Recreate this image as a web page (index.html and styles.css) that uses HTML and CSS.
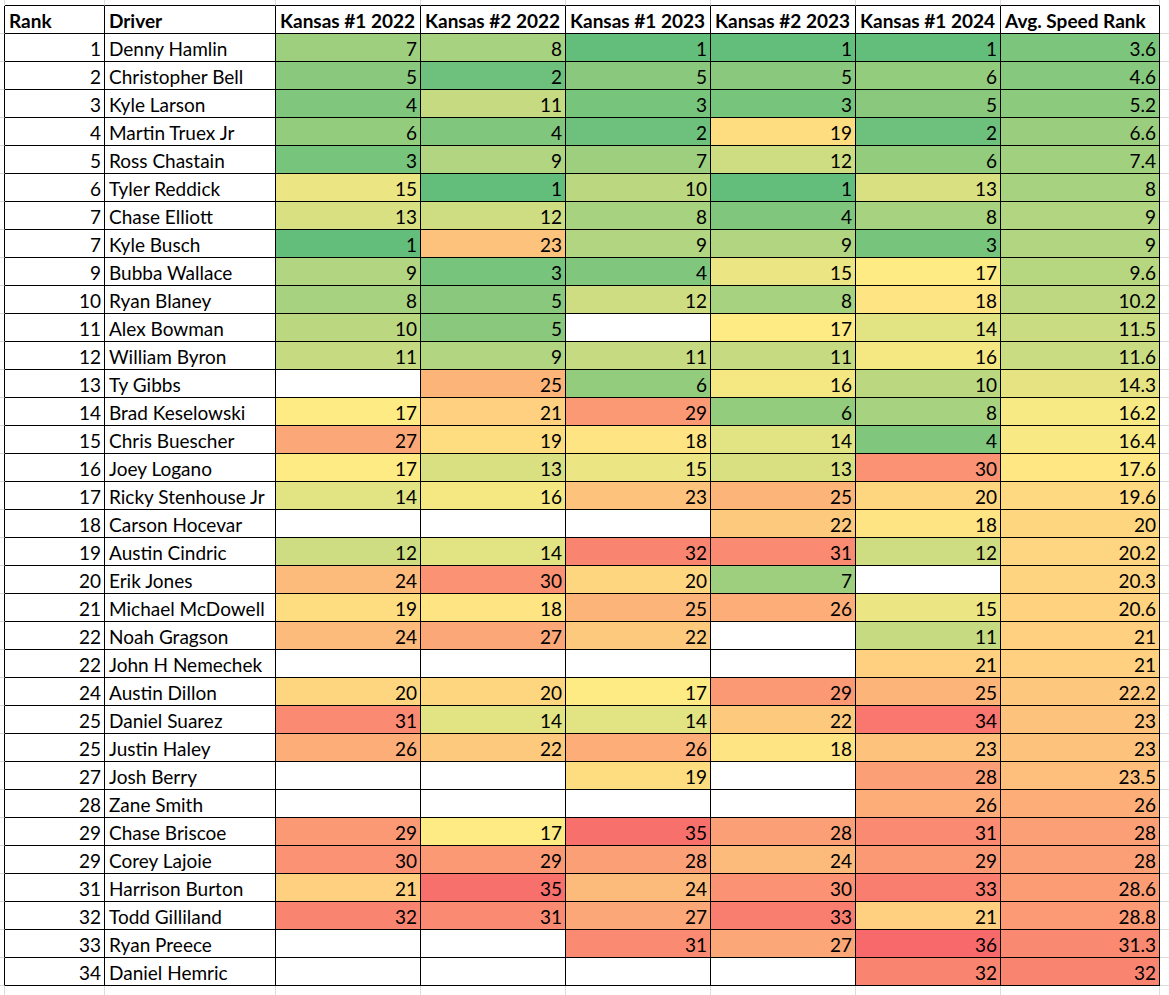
FILE: index.html
```html
<!DOCTYPE html>
<html lang="en">
<head>
<meta charset="utf-8">
<title>Kansas Speed Rankings</title>
<link rel="stylesheet" href="styles.css">
</head>
<body>
<table class="sheet">
<colgroup>
<col class="c-gl"><col class="c-rank"><col class="c-drv"><col class="c-k"><col class="c-k"><col class="c-k"><col class="c-k"><col class="c-k"><col class="c-avg"><col class="c-gr">
</colgroup>
<tbody>
<tr class="strip-top"><td class="gl"></td><td></td><td></td><td></td><td></td><td></td><td></td><td></td><td></td><td class="gr"></td></tr>
<tr class="head"><td class="gl"></td><th>Rank</th><th>Driver</th><th>Kansas #1 2022</th><th>Kansas #2 2022</th><th>Kansas #1 2023</th><th>Kansas #2 2023</th><th>Kansas #1 2024</th><th>Avg. Speed Rank</th><td class="gr"></td></tr>
<tr><td class="gl"></td><td class="num">1</td><td class="drv">Denny Hamlin</td><td class="num v">7</td><td class="num v">8</td><td class="num v">1</td><td class="num v">1</td><td class="num v">1</td><td class="num v">3.6</td><td class="gr"></td></tr>
<tr><td class="gl"></td><td class="num">2</td><td class="drv">Christopher Bell</td><td class="num v">5</td><td class="num v">2</td><td class="num v">5</td><td class="num v">5</td><td class="num v">6</td><td class="num v">4.6</td><td class="gr"></td></tr>
<tr><td class="gl"></td><td class="num">3</td><td class="drv">Kyle Larson</td><td class="num v">4</td><td class="num v">11</td><td class="num v">3</td><td class="num v">3</td><td class="num v">5</td><td class="num v">5.2</td><td class="gr"></td></tr>
<tr><td class="gl"></td><td class="num">4</td><td class="drv">Martin Truex Jr</td><td class="num v">6</td><td class="num v">4</td><td class="num v">2</td><td class="num v">19</td><td class="num v">2</td><td class="num v">6.6</td><td class="gr"></td></tr>
<tr><td class="gl"></td><td class="num">5</td><td class="drv">Ross Chastain</td><td class="num v">3</td><td class="num v">9</td><td class="num v">7</td><td class="num v">12</td><td class="num v">6</td><td class="num v">7.4</td><td class="gr"></td></tr>
<tr><td class="gl"></td><td class="num">6</td><td class="drv">Tyler Reddick</td><td class="num v">15</td><td class="num v">1</td><td class="num v">10</td><td class="num v">1</td><td class="num v">13</td><td class="num v">8</td><td class="gr"></td></tr>
<tr><td class="gl"></td><td class="num">7</td><td class="drv">Chase Elliott</td><td class="num v">13</td><td class="num v">12</td><td class="num v">8</td><td class="num v">4</td><td class="num v">8</td><td class="num v">9</td><td class="gr"></td></tr>
<tr><td class="gl"></td><td class="num">7</td><td class="drv">Kyle Busch</td><td class="num v">1</td><td class="num v">23</td><td class="num v">9</td><td class="num v">9</td><td class="num v">3</td><td class="num v">9</td><td class="gr"></td></tr>
<tr><td class="gl"></td><td class="num">9</td><td class="drv">Bubba Wallace</td><td class="num v">9</td><td class="num v">3</td><td class="num v">4</td><td class="num v">15</td><td class="num v">17</td><td class="num v">9.6</td><td class="gr"></td></tr>
<tr><td class="gl"></td><td class="num">10</td><td class="drv">Ryan Blaney</td><td class="num v">8</td><td class="num v">5</td><td class="num v">12</td><td class="num v">8</td><td class="num v">18</td><td class="num v">10.2</td><td class="gr"></td></tr>
<tr><td class="gl"></td><td class="num">11</td><td class="drv">Alex Bowman</td><td class="num v">10</td><td class="num v">5</td><td class="num v"></td><td class="num v">17</td><td class="num v">14</td><td class="num v">11.5</td><td class="gr"></td></tr>
<tr><td class="gl"></td><td class="num">12</td><td class="drv">William Byron</td><td class="num v">11</td><td class="num v">9</td><td class="num v">11</td><td class="num v">11</td><td class="num v">16</td><td class="num v">11.6</td><td class="gr"></td></tr>
<tr><td class="gl"></td><td class="num">13</td><td class="drv">Ty Gibbs</td><td class="num v"></td><td class="num v">25</td><td class="num v">6</td><td class="num v">16</td><td class="num v">10</td><td class="num v">14.3</td><td class="gr"></td></tr>
<tr><td class="gl"></td><td class="num">14</td><td class="drv">Brad Keselowski</td><td class="num v">17</td><td class="num v">21</td><td class="num v">29</td><td class="num v">6</td><td class="num v">8</td><td class="num v">16.2</td><td class="gr"></td></tr>
<tr><td class="gl"></td><td class="num">15</td><td class="drv">Chris Buescher</td><td class="num v">27</td><td class="num v">19</td><td class="num v">18</td><td class="num v">14</td><td class="num v">4</td><td class="num v">16.4</td><td class="gr"></td></tr>
<tr><td class="gl"></td><td class="num">16</td><td class="drv">Joey Logano</td><td class="num v">17</td><td class="num v">13</td><td class="num v">15</td><td class="num v">13</td><td class="num v">30</td><td class="num v">17.6</td><td class="gr"></td></tr>
<tr><td class="gl"></td><td class="num">17</td><td class="drv">Ricky Stenhouse Jr</td><td class="num v">14</td><td class="num v">16</td><td class="num v">23</td><td class="num v">25</td><td class="num v">20</td><td class="num v">19.6</td><td class="gr"></td></tr>
<tr><td class="gl"></td><td class="num">18</td><td class="drv">Carson Hocevar</td><td class="num v"></td><td class="num v"></td><td class="num v"></td><td class="num v">22</td><td class="num v">18</td><td class="num v">20</td><td class="gr"></td></tr>
<tr><td class="gl"></td><td class="num">19</td><td class="drv">Austin Cindric</td><td class="num v">12</td><td class="num v">14</td><td class="num v">32</td><td class="num v">31</td><td class="num v">12</td><td class="num v">20.2</td><td class="gr"></td></tr>
<tr><td class="gl"></td><td class="num">20</td><td class="drv">Erik Jones</td><td class="num v">24</td><td class="num v">30</td><td class="num v">20</td><td class="num v">7</td><td class="num v"></td><td class="num v">20.3</td><td class="gr"></td></tr>
<tr><td class="gl"></td><td class="num">21</td><td class="drv">Michael McDowell</td><td class="num v">19</td><td class="num v">18</td><td class="num v">25</td><td class="num v">26</td><td class="num v">15</td><td class="num v">20.6</td><td class="gr"></td></tr>
<tr><td class="gl"></td><td class="num">22</td><td class="drv">Noah Gragson</td><td class="num v">24</td><td class="num v">27</td><td class="num v">22</td><td class="num v"></td><td class="num v">11</td><td class="num v">21</td><td class="gr"></td></tr>
<tr><td class="gl"></td><td class="num">22</td><td class="drv">John H Nemechek</td><td class="num v"></td><td class="num v"></td><td class="num v"></td><td class="num v"></td><td class="num v">21</td><td class="num v">21</td><td class="gr"></td></tr>
<tr><td class="gl"></td><td class="num">24</td><td class="drv">Austin Dillon</td><td class="num v">20</td><td class="num v">20</td><td class="num v">17</td><td class="num v">29</td><td class="num v">25</td><td class="num v">22.2</td><td class="gr"></td></tr>
<tr><td class="gl"></td><td class="num">25</td><td class="drv">Daniel Suarez</td><td class="num v">31</td><td class="num v">14</td><td class="num v">14</td><td class="num v">22</td><td class="num v">34</td><td class="num v">23</td><td class="gr"></td></tr>
<tr><td class="gl"></td><td class="num">25</td><td class="drv">Justin Haley</td><td class="num v">26</td><td class="num v">22</td><td class="num v">26</td><td class="num v">18</td><td class="num v">23</td><td class="num v">23</td><td class="gr"></td></tr>
<tr><td class="gl"></td><td class="num">27</td><td class="drv">Josh Berry</td><td class="num v"></td><td class="num v"></td><td class="num v">19</td><td class="num v"></td><td class="num v">28</td><td class="num v">23.5</td><td class="gr"></td></tr>
<tr><td class="gl"></td><td class="num">28</td><td class="drv">Zane Smith</td><td class="num v"></td><td class="num v"></td><td class="num v"></td><td class="num v"></td><td class="num v">26</td><td class="num v">26</td><td class="gr"></td></tr>
<tr><td class="gl"></td><td class="num">29</td><td class="drv">Chase Briscoe</td><td class="num v">29</td><td class="num v">17</td><td class="num v">35</td><td class="num v">28</td><td class="num v">31</td><td class="num v">28</td><td class="gr"></td></tr>
<tr><td class="gl"></td><td class="num">29</td><td class="drv">Corey Lajoie</td><td class="num v">30</td><td class="num v">29</td><td class="num v">28</td><td class="num v">24</td><td class="num v">29</td><td class="num v">28</td><td class="gr"></td></tr>
<tr><td class="gl"></td><td class="num">31</td><td class="drv">Harrison Burton</td><td class="num v">21</td><td class="num v">35</td><td class="num v">24</td><td class="num v">30</td><td class="num v">33</td><td class="num v">28.6</td><td class="gr"></td></tr>
<tr><td class="gl"></td><td class="num">32</td><td class="drv">Todd Gilliland</td><td class="num v">32</td><td class="num v">31</td><td class="num v">27</td><td class="num v">33</td><td class="num v">21</td><td class="num v">28.8</td><td class="gr"></td></tr>
<tr><td class="gl"></td><td class="num">33</td><td class="drv">Ryan Preece</td><td class="num v"></td><td class="num v"></td><td class="num v">31</td><td class="num v">27</td><td class="num v">36</td><td class="num v">31.3</td><td class="gr"></td></tr>
<tr><td class="gl"></td><td class="num">34</td><td class="drv">Daniel Hemric</td><td class="num v"></td><td class="num v"></td><td class="num v"></td><td class="num v"></td><td class="num v">32</td><td class="num v">32</td><td class="gr"></td></tr>
<tr class="strip-bot"><td class="gl"></td><td></td><td></td><td></td><td></td><td></td><td></td><td></td><td></td><td class="gr"></td></tr>
</tbody>
</table>
<script src="script.js"></script>
</body>
</html>
```

FILE: styles.css
```css
html, body {
  margin: 0;
  padding: 0;
  background: #ffffff;
}

body {
  font-family: Lato, "Liberation Sans", sans-serif;
  font-size: 19px;
  color: #000000;
  overflow: hidden;
}

.sheet {
  border-collapse: separate;
  border-spacing: 0;
  table-layout: fixed;
  width: 1169px;
}

.c-gl { width: 5px; }
.c-rank { width: 100px; }
.c-drv { width: 171px; }
.c-k { width: 145px; }
.c-avg { width: 159px; }
.c-gr { width: 9px; }

.sheet td,
.sheet th {
  box-sizing: border-box;
  height: 28px;
  padding: 0 3px 1px 4px;
  border: 0;
  border-right: 1px solid #000000;
  border-bottom: 1px solid #000000;
  vertical-align: bottom;
  line-height: 22px;
  white-space: nowrap;
  overflow: hidden;
  text-align: left;
  background: #ffffff;
}

.sheet th {
  font-weight: 700;
}

.sheet .num {
  text-align: right;
  padding-right: 3px;
}

.sheet .gl {
  padding: 0;
  border-right-color: #000000;
  border-bottom-color: #dcdcdc;
}

.sheet .gr {
  padding: 0;
  border-right: 0;
  border-bottom-color: #dcdcdc;
}

.strip-top td {
  height: 6px !important;
  padding: 0 !important;
  border-right-color: #dcdcdc !important;
  border-bottom-color: #000000;
}

.strip-top .gl,
.strip-top .gr {
  border-bottom-color: #ffffff !important;
}

.strip-bot td {
  height: 9px !important;
  padding: 0 !important;
  border-bottom: 0 !important;
  border-right-color: #dcdcdc !important;
}
```

FILE: script.js
```js
(function () {
  var cells = Array.prototype.slice.call(document.querySelectorAll('td.v'));
  var vals = [];
  cells.forEach(function (c) {
    var t = c.textContent.trim();
    if (t !== '') vals.push(parseFloat(t));
  });
  vals.sort(function (a, b) { return a - b; });
  var min = vals[0];
  var max = vals[vals.length - 1];
  var pos = (vals.length - 1) * 0.5;
  var lo = Math.floor(pos);
  var hi = Math.ceil(pos);
  var mid = vals[lo] + (vals[hi] - vals[lo]) * (pos - lo);

  var green = [99, 190, 123];
  var yellow = [255, 235, 132];
  var red = [248, 105, 107];

  function mix(a, b, t) {
    return [0, 1, 2].map(function (i) {
      return Math.round(a[i] + (b[i] - a[i]) * t);
    });
  }

  cells.forEach(function (c) {
    var t = c.textContent.trim();
    if (t === '') return;
    var v = parseFloat(t);
    var col;
    if (v <= mid) {
      col = mix(green, yellow, (v - min) / (mid - min));
    } else {
      col = mix(yellow, red, (v - mid) / (max - mid));
    }
    c.style.backgroundColor = 'rgb(' + col.join(',') + ')';
  });
})();
```
